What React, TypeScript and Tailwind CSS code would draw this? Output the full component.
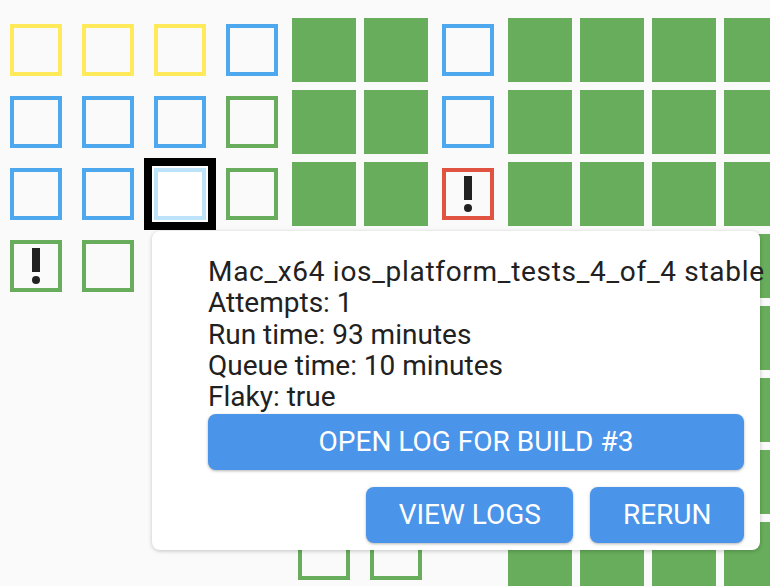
import React from 'react';

type Cell =
  | { kind: 'empty' }
  | { kind: 'filled' }
  | { kind: 'outline'; color: string; flaky?: boolean; selected?: boolean };

const E: Cell = { kind: 'empty' };
const G: Cell = { kind: 'filled' };
const y: Cell = { kind: 'outline', color: 'border-[#ffea5c]' };
const b: Cell = { kind: 'outline', color: 'border-[#4ea8ee]' };
const g: Cell = { kind: 'outline', color: 'border-[#67ad5b]' };
const gF: Cell = { kind: 'outline', color: 'border-[#67ad5b]', flaky: true };
const rF: Cell = { kind: 'outline', color: 'border-[#e05341]', flaky: true };
const sel: Cell = { kind: 'outline', color: 'border-[#bde3fa]', selected: true };

// 8 rows x 11 columns; cells under the tooltip are guesses
const grid: Cell[][] = [
  [y, y, y, b, G, G, b, G, G, G, G],
  [b, b, b, g, G, G, b, G, G, G, G],
  [b, b, sel, g, G, G, rF, G, G, G, G],
  [gF, g, E, E, G, G, E, G, G, G, G],
  [E, E, E, E, G, G, E, G, G, G, G],
  [E, E, E, E, G, G, E, G, G, G, G],
  [E, E, E, E, G, G, E, G, G, G, G],
  [E, E, E, E, g, g, E, G, G, G, G],
];

const PriorityHigh = () => (
  <svg className="w-12 h-12 shrink-0" viewBox="0 0 24 24" fill="#212121">
    <path d="M10 3h4v12h-4z" />
    <circle cx="12" cy="19" r="2" />
  </svg>
);

const TaskCell: React.FC<{ cell: Cell }> = ({ cell }) => {
  if (cell.kind === 'empty') return <div className="w-16 h-16" />;
  if (cell.kind === 'filled') return <div className="w-16 h-16 bg-[#67ad5b]" />;
  return (
    <div
      className={`w-16 h-16 flex items-center justify-center ${
        cell.selected ? 'bg-white outline-8 outline-black -outline-offset-4' : ''
      }`}
    >
      <div className={`w-[52px] h-[52px] border-4 ${cell.color} flex items-center justify-center`}>
        {cell.flaky && <PriorityHigh />}
      </div>
    </div>
  );
};

const Button: React.FC<{ label: string; wide?: boolean }> = ({ label, wide }) => (
  <button
    className={`h-[56px] rounded-lg bg-[#4a94ea] text-white text-[28px] font-normal shadow-[0_1px_3px_rgba(0,0,0,0.3)] ${
      wide ? 'w-full' : 'px-[32.5px]'
    }`}
  >
    {label}
  </button>
);

export default function App() {
  return (
    <div
      className="relative w-full h-[586px] overflow-hidden bg-[#fafafa]"
      style={{ fontFamily: 'Roboto, "Noto Sans", sans-serif' }}
    >
      <div className="grid grid-cols-[repeat(11,64px)] gap-2 pl-1 pt-[18px] w-max">
        {grid.flatMap((row, r) =>
          row.map((cell, c) => <TaskCell key={`${r}-${c}`} cell={cell} />)
        )}
      </div>

      <div className="absolute left-[152px] top-[231px] w-[608px] h-[319px] rounded-lg bg-white shadow-[0_1px_4px_rgba(0,0,0,0.22)] pl-[56px] pr-4 pt-[25px] flex flex-col">
        <div className="text-[28px] leading-[31.25px] text-[#212121] whitespace-nowrap mb-[2px]">
          <div className="tracking-[0.7px]">Mac_x64 ios_platform_tests_4_of_4 stable</div>
          <div>Attempts: 1</div>
          <div>Run time: 93 minutes</div>
          <div>Queue time: 10 minutes</div>
          <div>Flaky: true</div>
        </div>
        <Button label="OPEN LOG FOR BUILD #3" wide />
        <div className="flex justify-end gap-[17px] mt-[17px]">
          <Button label="VIEW LOGS" />
          <Button label="RERUN" />
        </div>
      </div>
    </div>
  );
}
